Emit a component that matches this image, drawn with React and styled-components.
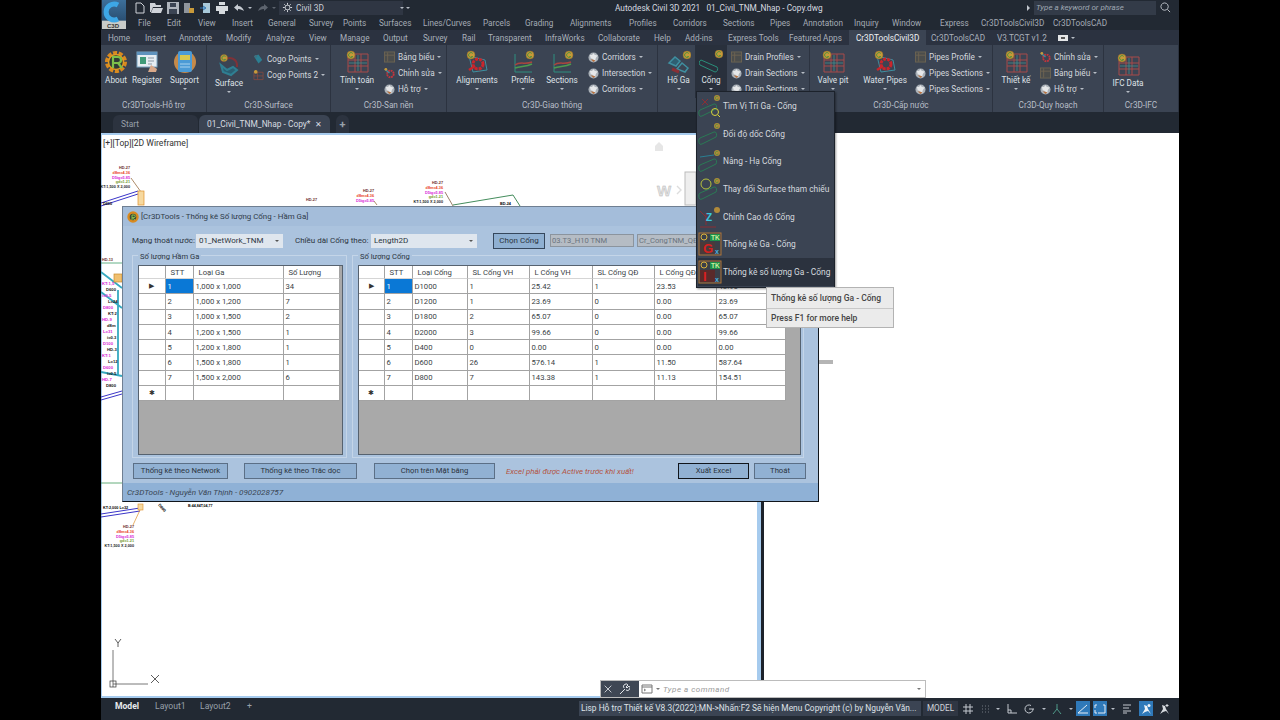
import React from 'react';
import styled, { createGlobalStyle } from 'styled-components';

const GlobalStyle = createGlobalStyle`
  html, body { margin: 0; padding: 0; background: #000; overflow: hidden; }
  #root { height: 720px; }
  * { box-sizing: border-box; }
  svg { flex: none; }
`;

const Page = styled.div`
  width: 1280px;
  height: 720px;
  background: #000;
  padding: 0 101px;
  font-family: Roboto, "Liberation Sans", sans-serif;
  font-size: 8.2px;
`;

const Shell = styled.div`
  position: relative;
  width: 1078px;
  height: 720px;
  display: flex;
  flex-direction: column;
  background: #222933;
  overflow: hidden;
`;

/* ---------- top bars ---------- */
const TopBar = styled.div`
  display: flex;
  height: 30px;
  background: #222933;
`;

const AppButton = styled.div`
  width: 24px;
  height: 29px;
  margin-left: 1px;
  background: linear-gradient(#3d6f9a, #2a4f72 70%, #c9ccc8 72%);
`;

const TopRows = styled.div`
  display: flex;
  flex-direction: column;
  flex: 1;
`;

const QuickRow = styled.div`
  display: flex;
  align-items: center;
  height: 15px;
  padding-left: 8px;
`;

const QuickIcon = styled.div`
  flex: none;
  width: ${p => p.$w}px;
  height: 12px;
  display: flex;
  align-items: center;
`;

const Workspace = styled.div`
  flex: none;
  display: flex;
  align-items: center;
  width: 124px;
  height: 14px;
  background: #2f3643;
  color: #c9ced6;
  padding: 0 3px;
  gap: 3px;
  font-size: 8.4px;
  white-space: nowrap;
`;

const Caret = styled.span`
  flex: none;
  display: inline-block;
  width: 0;
  height: 0;
  border-left: 2px solid transparent;
  border-right: 2px solid transparent;
  border-top: 2.5px solid ${p => p.$color || '#b7bdc6'};
  margin-left: ${p => p.$ml || 0}px;
`;

const WindowTitle = styled.div`
  flex: none;
  margin-left: 205px;
  width: 412px;
  color: #d7dbe0;
  font-size: 8.3px;
  white-space: pre;
`;

const SearchArrow = styled.span`
  flex: none;
  width: 7px;
  height: 0;
  border-left: 3px solid #c3c8cf;
  border-top: 3px solid transparent;
  border-bottom: 3px solid transparent;
  border-right: 0;
`;

const SearchBox = styled.div`
  flex: none;
  display: flex;
  align-items: center;
  width: 122px;
  height: 14px;
  margin-right: 4px;
  background: #333b48;
  color: #9fa7b2;
  font-style: italic;
  font-size: 8px;
  padding-left: 2px;
  white-space: nowrap;
`;

const TextRow = styled.div`
  display: flex;
  align-items: center;
  height: ${p => p.$h}px;
  background: ${p => p.$bg || 'transparent'};
  padding-left: ${p => p.$pad || 0}px;
`;

const Cell = styled.div`
  flex: none;
  width: ${p => p.$w}px;
  height: 100%;
  display: flex;
  align-items: center;
  white-space: nowrap;
`;

const MenuLabel = styled.span`
  color: #a4abb5;
  font-size: 8.2px;
`;

const RibbonTab = styled.span`
  display: flex;
  align-items: center;
  height: 100%;
  padding: 0 7px;
  font-size: 8.2px;
  color: ${p => (p.$active ? '#f1f3f5' : '#aab1bb')};
  background: ${p => (p.$active ? '#3b4453' : 'transparent')};
`;

/* ---------- ribbon ---------- */
const Ribbon = styled.div`
  display: flex;
  height: 67px;
  background: #3b4453;
`;

const Panel = styled.div`
  flex: none;
  width: ${p => p.$w}px;
  display: flex;
  flex-direction: column;
  border-right: 1px solid #2c3340;
`;

const PanelBody = styled.div`
  display: flex;
  height: 53px;
  padding-left: ${p => p.$pad || 0}px;
`;

const PanelLabel = styled.div`
  height: 14px;
  line-height: 15px;
  text-align: center;
  color: #b9bfc8;
  font-size: 8.2px;
  white-space: nowrap;
`;

const LargeButton = styled.div`
  flex: none;
  width: ${p => p.$w}px;
  display: flex;
  flex-direction: column;
  align-items: center;
  padding-top: ${p => (p.$low ? 8 : 5)}px;
  background: ${p => (p.$active ? '#29303c' : 'transparent')};
  color: #dfe2e7;
  font-size: 8.2px;
  line-height: 12px;
  white-space: nowrap;
`;

const LargeCaret = styled(Caret)`
  margin-top: 2px;
`;

const SmallList = styled.div`
  flex: none;
  display: flex;
  flex-direction: column;
  padding-top: ${p => p.$top || 4}px;
  padding-left: ${p => p.$pad || 0}px;
`;

const SmallButton = styled.div`
  display: flex;
  align-items: center;
  gap: 3px;
  height: 16px;
  color: #d5d9df;
  font-size: 8.2px;
  white-space: nowrap;
`;

/* ---------- document tabs ---------- */
const DocTabs = styled.div`
  display: flex;
  align-items: flex-end;
  height: 21px;
  padding-left: 12px;
  background: #222933;
  gap: 1px;
`;

const DocTab = styled.div`
  display: flex;
  align-items: center;
  justify-content: space-between;
  width: ${p => p.$w}px;
  height: 18px;
  padding: 0 8px;
  border-radius: 6px 6px 0 0;
  background: ${p => (p.$active ? '#3b4453' : '#2c333f')};
  color: ${p => (p.$active ? '#d7dbe0' : '#98a0aa')};
  font-size: 8.4px;
  white-space: nowrap;
`;

const PlusTab = styled(DocTab)`
  margin-left: 5px;
  padding: 0;
  justify-content: center;
  font-size: 11px;
  font-weight: 700;
`;

/* ---------- drawing ---------- */
const Canvas = styled.div`
  position: relative;
  display: flex;
  flex: 1;
  background: #fff;
`;

const ActiveViewport = styled.div`
  flex: none;
  width: 660px;
  background: #fff;
  border: 2px solid #a6cbee;
  border-left-width: 1px;
  border-right-width: 4px;
`;

const ViewportSplit = styled.div`
  flex: none;
  width: 3px;
  background: #1c222b;
`;

const SideViewport = styled.div`
  flex: 1;
  background: #fff;
`;

const ViewLabel = styled.div`
  font-size: 8.6px;
  line-height: 11px;
  margin-top: 3px;
  padding-left: 1px;
  color: #333;
`;

const Drawing = styled.svg`
  position: absolute;
  left: 0;
  top: 0;
`;

/* ---------- dialog ---------- */
const Dialog = styled.div`
  position: absolute;
  left: 21px;
  top: 206px;
  width: 697px;
  height: 296px;
  display: flex;
  flex-direction: column;
  background: #abc3de;
  border: 1px solid #6f7f92;
  border-right: 1px solid #10151b;
  border-bottom: 1.5px solid #10151b;
  font-family: Roboto, "Liberation Sans", sans-serif;
  color: #2c3541;
`;

const DialogTitle = styled.div`
  display: flex;
  align-items: center;
  gap: 2px;
  height: 19px;
  padding-left: 4px;
  background: #a4bdda;
  font-size: 7.9px;
  color: #2f3a48;
  white-space: nowrap;
`;

const FormRow = styled.div`
  display: flex;
  align-items: center;
  height: 15px;
  margin-top: 7px;
  padding-left: 9px;
  font-size: 8px;
`;

const FormLabel = styled.span`
  width: ${p => p.$w}px;
  flex: none;
  white-space: nowrap;
`;

const Combo = styled.div`
  flex: none;
  display: flex;
  align-items: center;
  justify-content: space-between;
  width: ${p => p.$w}px;
  height: 14px;
  margin-right: ${p => p.$mr || 0}px;
  padding: 0 4px 0 3px;
  background: #dfe6ee;
  font-size: 8px;
  white-space: nowrap;
`;

const PickButton = styled.div`
  flex: none;
  width: 52px;
  height: 16px;
  line-height: 14px;
  text-align: center;
  background: #8fb0d2;
  border: 1px solid #35475c;
  margin-right: 5px;
  font-size: 8px;
`;

const ReadOnly = styled.div`
  flex: none;
  width: ${p => p.$w}px;
  height: 13px;
  line-height: 11px;
  padding-left: 1px;
  margin-right: 3px;
  background: #b5bcc4;
  border: 1px solid #8b949e;
  color: #6a7480;
  font-size: 7.6px;
  overflow: hidden;
  white-space: nowrap;
`;

const Groups = styled.div`
  display: flex;
  gap: 5px;
  height: 203px;
  margin-top: 7px;
  padding-left: 9px;
`;

const GroupBox = styled.div`
  position: relative;
  flex: none;
  width: ${p => p.$w}px;
  height: 203px;
  padding: 9px 3px 3px 5px;
  border: 1px solid #c4d5e8;
`;

const GroupTitle = styled.span`
  position: absolute;
  left: 5px;
  top: -4px;
  padding: 0 2px;
  background: #abc3de;
  font-size: 7.6px;
  line-height: 10px;
  white-space: nowrap;
`;

const GridFrame = styled.div`
  width: ${p => p.$w}px;
  height: 190px;
  background: #a9a9a9;
  border: 1px solid #56626f;
  border-top-width: 1.5px;
  border-left-width: 1.5px;
`;

const DataGrid = styled.div`
  display: grid;
  grid-template-columns: ${p => p.$cols};
  grid-template-rows: 13px repeat(8, 15.3px);
  justify-content: start;
`;

const GridCell = styled.div`
  display: flex;
  align-items: center;
  padding-left: ${p => (p.$head ? 5 : 2)}px;
  background: ${p => (p.$selected ? '#0a78d6' : '#fff')};
  color: ${p => (p.$selected ? '#fff' : '#3a3f46')};
  border-right: 1px solid #a3a3a3;
  border-bottom: 1px solid ${p => (p.$head ? '#d5d5d5' : '#a3a3a3')};
  font-size: 7.7px;
  white-space: nowrap;
  overflow: hidden;
`;

const RowHead = styled(GridCell)`
  justify-content: center;
  padding: 0;
  color: #333;
  font-size: 6.5px;
`;

const ActionRow = styled.div`
  display: flex;
  align-items: center;
  height: 16px;
  margin-top: 5px;
  padding-left: 10px;
`;

const ActionButton = styled.div`
  flex: none;
  width: ${p => p.$w}px;
  height: 16px;
  line-height: 14px;
  margin-right: ${p => p.$mr}px;
  text-align: center;
  background: #91b1d3;
  border: 1px solid ${p => (p.$primary ? '#10151b' : '#5b6f86')};
  font-size: 7.7px;
  color: #2b3440;
  white-space: nowrap;
`;

const Warning = styled.span`
  flex: none;
  width: 172px;
  color: #b4533f;
  font-style: italic;
  font-size: 7.9px;
  white-space: nowrap;
`;

const DialogStatus = styled.div`
  display: flex;
  align-items: center;
  flex: 1;
  margin-top: 4px;
  padding-left: 4px;
  background: #8fb1d6;
  color: #3a4654;
  font-style: italic;
  font-size: 8.1px;
  white-space: nowrap;
`;

/* ---------- dropdown + tooltip ---------- */
const Dropdown = styled.div`
  position: absolute;
  left: 595px;
  top: 91px;
  width: 139px;
  height: 197px;
  padding: 0 0 1px 1px;
  background: #3b4453;
  border: 1px solid #1c222b;
  box-shadow: 1px 1px 2px rgba(0, 0, 0, 0.4);
`;

const DropItem = styled.div`
  display: flex;
  align-items: center;
  gap: 1px;
  height: 27.7px;
  color: #d5d9df;
  font-size: 8.4px;
  white-space: nowrap;
  background: ${p => (p.$hover ? '#2b323e' : 'transparent')};
`;

const Tooltip = styled.div`
  position: absolute;
  left: 665px;
  top: 287px;
  width: 128px;
  height: 41px;
  background: #ebebeb;
  border: 1px solid #b3b3b3;
  color: #444;
  font-size: 8.5px;
  font-weight: 500;
`;

const TipLine = styled.div`
  height: ${p => p.$h}px;
  padding-left: 4px;
  display: flex;
  align-items: center;
  border-top: ${p => (p.$rule ? '1px solid #c8c8c8' : 'none')};
  white-space: nowrap;
`;

/* ---------- command line + status ---------- */
const CommandLine = styled.div`
  position: absolute;
  left: 499px;
  top: 680px;
  width: 326px;
  height: 18px;
  display: flex;
  border: 1px solid #bcbcbc;
  background: #fff;
`;

const CommandTools = styled.div`
  display: flex;
  align-items: center;
  gap: 5px;
  width: 38px;
  padding-left: 2px;
  background: #3f4754;
  color: #d8dce1;
`;

const CommandInput = styled.div`
  flex: 1;
  display: flex;
  align-items: center;
  gap: 3px;
  padding: 0 4px 0 2px;
  color: #9a9a9a;
  font-style: italic;
  font-size: 8px;
  letter-spacing: 0.5px;
  white-space: nowrap;
`;

const TailCaret = styled(Caret)`
  margin-left: auto;
`;

const StatusBar = styled.div`
  display: flex;
  height: 22px;
  background: #222933;
  padding-top: 3px;
`;

const LayoutTabs = styled.div`
  display: flex;
  flex: none;
  width: 478px;
  height: 16px;
  margin-top: -2px;
  padding-left: 14px;
`;

const LayoutTab = styled.span`
  flex: none;
  width: ${p => p.$w}px;
  line-height: 15px;
  color: ${p => (p.$active ? '#e8eaed' : '#98a0aa')};
  font-size: 8.6px;
  font-weight: ${p => (p.$active ? 700 : 400)};
`;

const StatusText = styled.div`
  flex: none;
  width: 342px;
  height: 15px;
  line-height: 15px;
  padding-left: 2px;
  background: #3b4453;
  color: #dfe2e7;
  font-size: 8.4px;
  white-space: nowrap;
`;

const ModelBox = styled.div`
  flex: none;
  width: 35px;
  height: 15px;
  line-height: 15px;
  margin-left: 2px;
  text-align: center;
  background: #2f3643;
  color: #cfd3d9;
  font-size: 8.2px;
`;

const StatusIcon = styled.div`
  flex: none;
  display: flex;
  align-items: center;
  justify-content: center;
  width: ${p => p.$w}px;
  height: 15px;
  background: ${p => (p.$on ? '#2f79b9' : 'transparent')};
  margin-right: ${p => p.$mr || 0}px;
`;

/* ---------- icons ---------- */
const Icon = ({ size = 24, children }) => (
  <svg width={size} height={size} viewBox="0 0 24 24" fill="none">{children}</svg>
);

const Badge = ({ x = 18, y = 5, r = 4 }) => (
  <g>
    <circle cx={x} cy={y} r={r} fill="#c79a3a" stroke="#8a6a2a" strokeWidth="0.5" />
    <path d={`M${x + r * 0.45} ${y - r * 0.4}a${r * 0.6} ${r * 0.6} 0 1 0 0 ${r * 0.8}h-${r * 0.4}`} stroke="#4f8f3a" strokeWidth="1" />
  </g>
);

const GearIcon = () => (
  <Icon>
    <circle cx="12" cy="12" r="9" stroke="#d98a1f" strokeWidth="4" strokeDasharray="4 1.6" />
    <circle cx="12" cy="12" r="7.5" fill="#2f3a35" stroke="#e09a25" strokeWidth="1.5" />
    <path d="M9 18V7h5a3 3 0 0 1 0 6H9m5 0l4 5" stroke="#7cc04a" strokeWidth="2.2" />
  </Icon>
);

const RegisterIcon = () => (
  <Icon>
    <rect x="2" y="2" width="20" height="15" fill="#e6edf2" stroke="#7aa3c2" />
    <rect x="2" y="2" width="20" height="3" fill="#5f93bd" />
    <rect x="5" y="7" width="6" height="7" fill="#3f9a78" />
    <path d="M13 8h6M13 11h6M13 14h4" stroke="#8a97a3" />
    <path d="M13 22l3-7 6 4-1 3z" fill="#d9a98a" />
  </Icon>
);

const SupportIcon = () => (
  <Icon>
    <circle cx="12" cy="12" r="11" fill="#c58a4a" />
    <rect x="5" y="1" width="14" height="21" rx="2" fill="#4b9bd6" />
    <rect x="7" y="5" width="10" height="5" fill="#d8c84f" />
    <path d="M7 14h10M7 17h10" stroke="#a9d3ef" />
  </Icon>
);

const GridIcon = () => (
  <Icon>
    <path d="M3 4h20v18H3zM3 10h20M3 16h20M10 4v18M16 4v18" stroke="#a84a4a" strokeWidth="1" />
    <path d="M4 13h18M13 5v16" stroke="#3f8f8f" strokeWidth="0.8" />
    <Badge x={6} y={5} />
  </Icon>
);

const SurfaceIcon = () => (
  <Icon>
    <path d="M5 8c8-6 16-2 15 6" stroke="#7f3238" strokeWidth="2" />
    <path d="M4 12l6 5 6-3 4 3-6 5-8-3z" stroke="#2f7f92" strokeWidth="2" fill="#2b5f73" />
    <Badge x={7} y={5} r={3.5} />
  </Icon>
);

const AlignIcon = () => (
  <Icon>
    <path d="M4 6l16 4 2 10-14 2z" stroke="#3f8fa0" strokeWidth="1" />
    <circle cx="13" cy="14" r="5" stroke="#c8262c" strokeWidth="3" strokeDasharray="3 1" />
    <path d="M4 20l6-4" stroke="#c8262c" strokeWidth="2.5" />
    <Badge x={6} y={5} />
  </Icon>
);

const ProfileIcon = () => (
  <Icon>
    <path d="M4 4v18h17" stroke="#2f8f80" strokeWidth="1" />
    <path d="M4 15c5-4 10 0 17-3" stroke="#a9453f" strokeWidth="1.5" />
    <path d="M4 18c6-2 11-1 17-4" stroke="#4d9a4f" strokeWidth="1.5" />
    <Badge x={19} y={5} />
  </Icon>
);

const ManholeIcon = () => (
  <Icon>
    <path d="M2 13l6-6 5 4-4 5z" stroke="#3f8fa0" strokeWidth="1.5" fill="#2e5f72" />
    <path d="M10 19l5-6 6 5-3 4z" stroke="#3f8fa0" strokeWidth="1.5" />
    <path d="M5 19l7 3" stroke="#8a2f35" strokeWidth="3" />
    <Badge x={20} y={5} />
  </Icon>
);

const PipeIcon = ({ color = '#2a8f7a' }) => (
  <Icon>
    <path d="M2 10l16 7a2.5 3 0 0 1-2 5L1 15a2.5 3 0 0 1 1-5z" stroke={color} strokeWidth="1" />
    <Badge x={20} y={4} />
  </Icon>
);

const SmallGlobe = () => (
  <svg width="11" height="11" viewBox="0 0 12 12">
    <circle cx="6" cy="6" r="5.5" fill="#aab1b8" />
    <path d="M2 3c2 1 3 0 4-2 1 3 3 2 5 3-2 1-3 3-3 6-2-1-2-3-5-3z" fill="#e6e8ea" />
    <path d="M3 8l3 3 2-2z" fill="#b8703c" />
  </svg>
);

const SmallTable = () => (
  <svg width="11" height="12" viewBox="0 0 12 12">
    <rect x="0.5" y="0.5" width="11" height="11" fill="#4b4d4c" stroke="#6d6452" />
    <path d="M4 1v10M1 4h10" stroke="#6d6452" />
  </svg>
);

const SmallEdit = () => (
  <svg width="11" height="12" viewBox="0 0 12 12">
    <circle cx="7" cy="7" r="3.6" stroke="#c2353d" strokeWidth="2" fill="none" strokeDasharray="2 0.8" />
    <path d="M1 2l5 4" stroke="#3f8fa0" strokeWidth="1.5" />
    <circle cx="2" cy="2" r="1.5" fill="#c79a3a" />
  </svg>
);

const SmallCogo = () => (
  <svg width="11" height="12" viewBox="0 0 12 12">
    <path d="M1 3l5-2 4 6-4 4z" fill="#2c7f92" />
    <circle cx="3" cy="3" r="1.5" fill="#3f6f7f" />
  </svg>
);

const SmallCogoGrid = () => (
  <svg width="11" height="12" viewBox="0 0 12 12">
    <path d="M1 3h10v8H1zM1 7h10M5 3v8" stroke="#8a4a3f" strokeWidth="0.8" fill="none" />
    <circle cx="3" cy="2.5" r="2" fill="#c79a3a" />
  </svg>
);

const MenuPipe = ({ extra, color = '#2a7a55' }) => (
  <svg width="24" height="24" viewBox="0 0 24 24" fill="none">
    <path d="M2 16l14-6a2 3 0 0 1 2 5L4 22a2 3 0 0 1-2-6z" stroke={color} strokeWidth="1" />
    <circle cx="19" cy="4" r="3" fill="#b08a3a" />
    <path d="M20.300 3a1.700 1.700 0 1 0 0 2h-1" stroke="#5b8f3a" strokeWidth="0.8" />
    {extra}
  </svg>
);

const TkIcon = ({ letter, bg }) => (
  <svg width="24" height="24" viewBox="0 0 24 24" fontFamily="Liberation Sans, sans-serif" fontWeight="700">
    <rect x="1" y="1" width="22" height="22" fill="#3a3f48" stroke="#b0773a" />
    <rect x="12" y="2" width="10" height="7" fill="#1e8f4a" />
    <text x="13" y="8" fontSize="6.5" fill="#c8f0a0">TK</text>
    <circle cx="6" cy="5" r="3" stroke="#d8b13c" fill="none" />
    <rect x="2" y="10" width="15" height="12" fill={bg} />
    <text x="5" y="21" fontSize="13" fill="#d62020">{letter}</text>
    <text x="17" y="22" fontSize="7" fill="#4ab0e0">x</text>
  </svg>
);

const Arrow = ({ flip, color = '#c7ccd3' }) => (
  <svg width="12" height="10" viewBox="0 0 12 10" style={flip ? { transform: 'scaleX(-1)' } : undefined}>
    <path d="M5 1L1 4.500 5 8V6c3 0 4 1 6 2-1-3-3-5-6-5z" fill={color} />
  </svg>
);

/* ---------- data ---------- */
const menuStarts = [
  ['File', 137], ['Edit', 166], ['View', 197], ['Insert', 231], ['General', 267], ['Survey', 308],
  ['Points', 342], ['Surfaces', 378], ['Lines/Curves', 422], ['Parcels', 482], ['Grading', 524],
  ['Alignments', 569], ['Profiles', 628], ['Corridors', 672], ['Sections', 722], ['Pipes', 769],
  ['Annotation', 802], ['Inquiry', 853], ['Window', 891], ['Express', 939], ['Cr3DToolsCivil3D', 980],
  ['Cr3DToolsCAD', 1052], ['', 1120],
];

const tabStarts = [
  ['Home', 101], ['Insert', 138], ['Annotate', 172], ['Modify', 219], ['Analyze', 259], ['View', 302],
  ['Manage', 333], ['Output', 376], ['Survey', 416], ['Rail', 455], ['Transparent', 481],
  ['InfraWorks', 538], ['Collaborate', 591], ['Help', 647], ['Add-ins', 678], ['Express Tools', 721],
  ['Featured Apps', 782], ['Cr3DToolsCivil3D', 849], ['Cr3DToolsCAD', 924], ['V3.TCGT v1.2', 990], ['', 1058],
];

const withWidths = list => list.slice(0, -1).map(([label, x], i) => ({ label, w: list[i + 1][1] - x }));

const haRows = [
  ['1', '1,000 x 1,000', '34'], ['2', '1,000 x 1,200', '7'], ['3', '1,000 x 1,500', '2'],
  ['4', '1,200 x 1,500', '1'], ['5', '1,200 x 1,800', '1'], ['6', '1,500 x 1,800', '1'],
  ['7', '1,500 x 2,000', '6'], ['', '', ''],
];

const congRows = [
  ['1', 'D1000', '1', '25.42', '1', '23.53', '48.95'],
  ['2', 'D1200', '1', '23.69', '0', '0.00', '23.69'],
  ['3', 'D1800', '2', '65.07', '0', '0.00', '65.07'],
  ['4', 'D2000', '3', '99.66', '0', '0.00', '99.66'],
  ['5', 'D400', '0', '0.00', '0', '0.00', '0.00'],
  ['6', 'D600', '26', '576.14', '1', '11.50', '587.64'],
  ['7', 'D800', '7', '143.38', '1', '11.13', '154.51'],
  ['', '', '', '', '', '', ''],
];

const Table = ({ cols, heads, rows }) => (
  <DataGrid $cols={cols}>
    <GridCell $head />
    {heads.map((h, i) => <GridCell $head key={i}>{h}</GridCell>)}
    {rows.map((row, r) => (
      <React.Fragment key={r}>
        <RowHead>{r === 0 ? '▶' : r === rows.length - 1 ? '✱' : ''}</RowHead>
        {row.map((v, c) => <GridCell key={c} $selected={r === 0 && c === 0}>{v}</GridCell>)}
      </React.Fragment>
    ))}
  </DataGrid>
);

const stackLines = [
  ['HD-27', '#6b2a1a'], ['d8m=4.36', '#e8401a'], ['D5tg=5.85', '#d61fd6'], ['gd=1.21', '#6f9a1f'], ['KT:1,500 X 2,000', '#222'],
];

const LabelStack = ({ x, y, count = 5 }) => stackLines.slice(0, count).map(([t, c], i) => (
  <text key={t} x={x} y={y + i * 4.8} textAnchor="end" fontSize="3.8" fontWeight="700" fill={c} fontFamily="Liberation Sans, sans-serif">{t}</text>
));

const noise = [
  [102, 285, 'KT:1,5'], [106, 291, 'D600'], [102, 297, 'i=0.5'], [108, 303, 'L=24'], [103, 309, 'D800'], [108, 315, 'KT:2'],
  [102, 321, 'HD-9'], [107, 327, 'd8m'], [103, 333, 'L=31'], [107, 339, 'i=0.3'], [103, 345, 'D100'], [107, 351, 'HD-3'],
  [102, 357, 'KT:1'], [108, 363, 'L=12'], [103, 369, 'D600'], [107, 375, 'i=0.5'], [102, 381, 'HD-7'], [106, 387, 'D800'],
];

const CadDrawing = () => (
  <Drawing width="1078" height="565" viewBox="101 133 1078 565">
    <LabelStack x={130} y={169} />
    <path d="M131 178l10 14" stroke="#8a5a2a" strokeWidth="0.7" fill="none" />
    <path d="M101 203l37-12M101 206l37-12" stroke="#3a35c8" strokeWidth="1" />
    <rect x="138" y="191" width="6" height="14" fill="#f6d9a0" stroke="#e0902a" strokeWidth="0.7" />
    <text x="103" y="205" fontSize="3.800" fontWeight="700" fontFamily="Liberation Sans, sans-serif">D600</text>

    <LabelStack x={317} y={201} count={1} />
    <LabelStack x={374} y={192} count={3} />
    <path d="M374 201l3 4" stroke="#8a5a2a" strokeWidth="0.7" />
    <LabelStack x={443} y={184} />
    <path d="M445 192l8 14" stroke="#6b4a2a" strokeWidth="0.7" fill="none" />
    <path d="M453 205l60-10 7 11" stroke="#2f7f4a" strokeWidth="0.9" fill="none" />
    <text x="500" y="205" fontSize="3.800" fontWeight="700" fontFamily="Liberation Sans, sans-serif">BD-24</text>

    <path d="M101 263h21" stroke="#3fa06a" strokeWidth="0.8" />
    <text x="102" y="261" fontSize="3.800" fontWeight="700" fill="#6b2a1a" fontFamily="Liberation Sans, sans-serif">HD-13</text>
    <path d="M101 272l21 16M101 292l21 16M118 290v85M101 372l21 4" stroke="#37a9c0" strokeWidth="1.800" fill="none" />
    <rect x="114" y="274" width="8" height="8" fill="#f0c070" stroke="#c88a2a" strokeWidth="0.7" />
    {noise.map(([x, y, t]) => (
      <text key={y} x={x} y={y} fontSize="4.200" fontWeight="700" fill={y % 4 === 1 ? '#d61fd6' : '#111'} fontFamily="Liberation Sans, sans-serif">{t}</text>
    ))}
    <path d="M101 397l21-6M101 400l21-6" stroke="#3a35c8" strokeWidth="1" />

    <path d="M101 483h21" stroke="#3f9a5a" strokeWidth="0.8" />
    <path d="M101 514l39-6M101 517l39-6" stroke="#3a35c8" strokeWidth="1" />
    <text x="103" y="509" fontSize="3.800" fontWeight="700" fontFamily="Liberation Sans, sans-serif">KT:2,000 L=32</text>
    <path d="M133 525l7-15" stroke="#e0902a" strokeWidth="0.7" fill="none" />
    <rect x="138" y="504" width="5" height="6" fill="#f6d9a0" stroke="#e0902a" strokeWidth="0.6" />
    <LabelStack x={134} y={528} />
    <text x="188" y="507" fontSize="3.600" fontWeight="700" fontFamily="Liberation Sans, sans-serif">B:44,84T,04,77</text>
    <text x="158" y="505" fontSize="4" fontWeight="700" transform="rotate(50 158 505)" fontFamily="Liberation Sans, sans-serif">D800</text>

    {/* viewcube */}
    <path d="M655 146l4-4 4 4v5h-8z" fill="#e6e6e6" />
    <text x="657" y="196" fontSize="15" fontWeight="700" fill="#e2e2e2" stroke="#b5b5b5" strokeWidth="0.4" fontFamily="Liberation Sans, sans-serif">W</text>
    <path d="M677 186l4 4-4 4" stroke="#ddd" strokeWidth="1.400" fill="none" />
    <rect x="685" y="172" width="11" height="33" fill="#eee" stroke="#bbb" />

    <path d="M819 361h14M819 363h14" stroke="#444" strokeWidth="0.8" />

    {/* UCS */}
    <path d="M113 650v37M113 684h35" stroke="#555" strokeWidth="0.8" />
    <rect x="110" y="681" width="6" height="6" fill="none" stroke="#333" strokeWidth="0.7" />
    <path d="M115 639l3 4 3-4M118 643v4M151 675l8 8M159 675l-8 8" stroke="#333" strokeWidth="0.8" fill="none" />
  </Drawing>
);

const Glyph = ({ d, color = '#c3c8cf', size = 12 }) => (
  <svg width={size} height={size} viewBox="0 0 12 12" fill="none">
    <path d={d} stroke={color} strokeWidth="1" />
  </svg>
);

export default function App() {
  return (
    <Page>
      <GlobalStyle />
      <Shell>
        <TopBar>
          <AppButton>
            <svg width="24" height="29" viewBox="0 0 24 29">
              <path d="M16 5a8 8 0 1 0 0 14" stroke="#3da7e6" strokeWidth="5" fill="none" />
              <text x="5" y="27.500" fontSize="6" fontWeight="700" fill="#333" fontFamily="Liberation Sans, sans-serif">C3D</text>
            </svg>
          </AppButton>
          <TopRows>
            <QuickRow>
              <QuickIcon $w={16}><Glyph d="M2 1h5l3 3v7H2z" color="#cfd3d9" /></QuickIcon>
              <QuickIcon $w={17}><svg width="13" height="11" viewBox="0 0 13 11"><path d="M0 1h5l1 2h5v2H3L1 10H0zM3 6h10l-2 5H1z" fill="#cfd3d9" /></svg></QuickIcon>
              <QuickIcon $w={16}><svg width="12" height="12" viewBox="0 0 12 12"><path d="M0 0h12v12H0z" fill="#aeb4bc" /><path d="M3 1h6v4H3zM2 7h8v5H2z" fill="#3b4453" /></svg></QuickIcon>
              <QuickIcon $w={17}><svg width="12" height="12" viewBox="0 0 12 12"><path d="M1 1h6v10H1z" fill="#8f959c" /><path d="M6 6h5v5H6z" fill="#c99a3a" /></svg></QuickIcon>
              <QuickIcon $w={16}><svg width="12" height="12" viewBox="0 0 12 12"><path d="M3 1h7v10H3z" fill="#a9c9d9" /><path d="M0 6h5M3 4l3 2-3 2" stroke="#2f79b9" fill="none" /></svg></QuickIcon>
              <QuickIcon $w={17}><svg width="12" height="12" viewBox="0 0 12 12"><path d="M3 0h6v3H3zM0 4h12v5H0zM3 7h6v5H3z" fill="#d6dade" /></svg></QuickIcon>
              <QuickIcon $w={15}><Arrow /></QuickIcon>
              <QuickIcon $w={9}><Caret /></QuickIcon>
              <QuickIcon $w={15}><Arrow flip color="#5d646e" /></QuickIcon>
              <QuickIcon $w={7}><Caret $color="#5d646e" /></QuickIcon>
              <Workspace>
                <Glyph size={11} d="M6 1v2M6 9v2M1 6h2M9 6h2M2.500 2.500l1.500 1.500M8 8l1.500 1.500M2.500 9.500L4 8M8 4l1.500-1.500M6 3.500a2.500 2.500 0 1 0 .01 0z" color="#e3e6ea" />
                <span>Civil 3D</span>
                <Caret $ml={73} />
              </Workspace>
              <Caret $ml={3} />
              <WindowTitle>Autodesk Civil 3D 2021   01_Civil_TNM_Nhap - Copy.dwg</WindowTitle>
              <SearchArrow />
              <SearchBox>Type a keyword or phrase</SearchBox>
              <QuickIcon $w={16}><Glyph d="M5 1a4 4 0 1 0 .01 0zM8 8l3 3" size={11} /></QuickIcon>
            </QuickRow>
            <TextRow $h={15} $pad={12}>
              {withWidths(menuStarts).map(m => (
                <Cell key={m.label} $w={m.w}><MenuLabel>{m.label}</MenuLabel></Cell>
              ))}
            </TextRow>
          </TopRows>
        </TopBar>

        <TextRow $h={15} $bg="#2b3240">
          {withWidths(tabStarts).map(t => (
            <Cell key={t.label} $w={t.w}><RibbonTab $active={t.label === 'Cr3DToolsCivil3D'}>{t.label}</RibbonTab></Cell>
          ))}
          <Cell $w={20}><svg width="10" height="6" viewBox="0 0 10 6"><rect width="10" height="6" fill="#e4e6e8" /><rect x="3" y="2" width="4" height="2" fill="#555" /></svg><Caret $ml={3} /></Cell>
        </TextRow>

        <Ribbon>
          <Panel $w={106}>
            <PanelBody>
              <LargeButton $w={30}><GearIcon />About</LargeButton>
              <LargeButton $w={32}><RegisterIcon />Register</LargeButton>
              <LargeButton $w={43}><SupportIcon />Support<LargeCaret /></LargeButton>
            </PanelBody>
            <PanelLabel>Cr3DTools-Hỗ trợ</PanelLabel>
          </Panel>
          <Panel $w={124}>
            <PanelBody>
              <LargeButton $w={44} $low><SurfaceIcon />Surface<LargeCaret /></LargeButton>
              <SmallList $top={6} $pad={2}>
                <SmallButton><SmallCogo />Cogo Points <Caret /></SmallButton>
                <SmallButton><SmallCogoGrid />Cogo Points 2 <Caret /></SmallButton>
              </SmallList>
            </PanelBody>
            <PanelLabel>Cr3D-Surface</PanelLabel>
          </Panel>
          <Panel $w={116}>
            <PanelBody>
              <LargeButton $w={52}><GridIcon />Tính toán<LargeCaret /></LargeButton>
              <SmallList $pad={1}>
                <SmallButton><SmallTable />Bảng biểu <Caret /></SmallButton>
                <SmallButton><SmallEdit />Chỉnh sửa <Caret /></SmallButton>
                <SmallButton><SmallGlobe />Hỗ trợ <Caret /></SmallButton>
              </SmallList>
            </PanelBody>
            <PanelLabel>Cr3D-San nền</PanelLabel>
          </Panel>
          <Panel $w={211}>
            <PanelBody>
              <LargeButton $w={60}><AlignIcon />Alignments<LargeCaret /></LargeButton>
              <LargeButton $w={32}><ProfileIcon />Profile<LargeCaret /></LargeButton>
              <LargeButton $w={46}><ProfileIcon />Sections<LargeCaret /></LargeButton>
              <SmallList $pad={3}>
                <SmallButton><SmallGlobe />Corridors <Caret /></SmallButton>
                <SmallButton><SmallGlobe />Intersection <Caret /></SmallButton>
                <SmallButton><SmallGlobe />Corridors <Caret /></SmallButton>
              </SmallList>
            </PanelBody>
            <PanelLabel>Cr3D-Giao thông</PanelLabel>
          </Panel>
          <Panel $w={152}>
            <PanelBody $pad={4}>
              <LargeButton $w={33}><ManholeIcon />Hố Ga<LargeCaret /></LargeButton>
              <LargeButton $w={32} $active><PipeIcon />Cống<LargeCaret /></LargeButton>
              <SmallList $pad={4}>
                <SmallButton><SmallTable />Drain Profiles <Caret /></SmallButton>
                <SmallButton><SmallGlobe />Drain Sections <Caret /></SmallButton>
                <SmallButton><SmallGlobe />Drain Sections <Caret /></SmallButton>
              </SmallList>
            </PanelBody>
            <PanelLabel />
          </Panel>
          <Panel $w={183}>
            <PanelBody>
              <LargeButton $w={46}><GridIcon />Valve pit<LargeCaret /></LargeButton>
              <LargeButton $w={58}><AlignIcon />Water Pipes<LargeCaret /></LargeButton>
              <SmallList $pad={1}>
                <SmallButton><SmallTable />Pipes Profile <Caret /></SmallButton>
                <SmallButton><SmallGlobe />Pipes Sections <Caret /></SmallButton>
                <SmallButton><SmallGlobe />Pipes Sections <Caret /></SmallButton>
              </SmallList>
            </PanelBody>
            <PanelLabel>Cr3D-Cấp nước</PanelLabel>
          </Panel>
          <Panel $w={111}>
            <PanelBody>
              <LargeButton $w={46}><GridIcon />Thiết kế<LargeCaret /></LargeButton>
              <SmallList $pad={1}>
                <SmallButton><SmallEdit />Chỉnh sửa <Caret /></SmallButton>
                <SmallButton><SmallTable />Bảng biểu <Caret /></SmallButton>
                <SmallButton><SmallGlobe />Hỗ trợ <Caret /></SmallButton>
              </SmallList>
            </PanelBody>
            <PanelLabel>Cr3D-Quy hoạch</PanelLabel>
          </Panel>
          <Panel $w={75}>
            <PanelBody>
              <LargeButton $w={48} $low><GridIcon />IFC Data<LargeCaret /></LargeButton>
            </PanelBody>
            <PanelLabel>Cr3D-IFC</PanelLabel>
          </Panel>
        </Ribbon>

        <DocTabs>
          <DocTab $w={85}>Start</DocTab>
          <DocTab $w={131} $active>01_Civil_TNM_Nhap - Copy*<span>✕</span></DocTab>
          <PlusTab $w={13}>+</PlusTab>
        </DocTabs>

        <Canvas>
          <ActiveViewport>
            <ViewLabel>[+][Top][2D Wireframe]</ViewLabel>
          </ActiveViewport>
          <ViewportSplit />
          <SideViewport />
          <CadDrawing />
        </Canvas>

        <StatusBar>
          <LayoutTabs>
            <LayoutTab $w={40} $active>Model</LayoutTab>
            <LayoutTab $w={45}>Layout1</LayoutTab>
            <LayoutTab $w={47}>Layout2</LayoutTab>
            <LayoutTab $w={12}>+</LayoutTab>
          </LayoutTabs>
          <StatusText>Lisp Hỗ trợ Thiết kế V8.3(2022):MN-&gt;Nhấn:F2 Sẽ hiện Menu Copyright (c) by Nguyễn Văn...</StatusText>
          <ModelBox>MODEL</ModelBox>
          <StatusIcon $w={20}><Glyph d="M4 1v10M8 1v10M1 4h10M1 8h10" /></StatusIcon>
          <StatusIcon $w={14}><Glyph d="M3 3h.5M6 3h.5M9 3h.5M3 6h.5M6 6h.5M9 6h.5M3 9h.5M6 9h.5M9 9h.5" /></StatusIcon>
          <StatusIcon $w={12}><Caret /></StatusIcon>
          <StatusIcon $w={15}><Glyph d="M2 1v9h9M2 7h3v3" /></StatusIcon>
          <StatusIcon $w={20}><Glyph d="M10 6a4 4 0 1 1-2-3.500M6 6h5" /></StatusIcon>
          <StatusIcon $w={9}><Caret /></StatusIcon>
          <StatusIcon $w={18}><Glyph d="M6 1v5M6 6l-4 5M6 6l4 5" color="#4f9a8a" /></StatusIcon>
          <StatusIcon $w={10}><Caret /></StatusIcon>
          <StatusIcon $w={14} $on $mr={3}><Glyph d="M1 10L10 2M1 10h10" color="#e7eef5" /></StatusIcon>
          <StatusIcon $w={14} $on><Glyph d="M3 2H1v3M9 2h2v8H4M1 7v3h2" color="#e7eef5" /></StatusIcon>
          <StatusIcon $w={12}><Caret /></StatusIcon>
          <StatusIcon $w={16} $mr={4}><Glyph d="M2 2h8M2 5h6M2 8h8M2 10h4" /></StatusIcon>
          <StatusIcon $w={14} $on $mr={4}><svg width="12" height="12" viewBox="0 0 12 12"><path d="M2 11l3-5-1-4 3 1 1 3 3 5-3-3-3 1z" fill="#eef3f8" /><circle cx="9" cy="2.500" r="1.500" fill="#eef3f8" /></svg></StatusIcon>
          <StatusIcon $w={14}><svg width="12" height="12" viewBox="0 0 12 12"><path d="M2 11l3-5-1-4 3 1 1 3 3 5-3-3-3 1z" fill="#d7dbe0" /><path d="M9 1v3M7.500 2.500h3" stroke="#d7dbe0" /></svg></StatusIcon>
        </StatusBar>

        <Dialog>
          <DialogTitle>
            <svg width="12" height="12" viewBox="0 0 12 12">
              <circle cx="6" cy="6" r="4.500" stroke="#d98a1f" strokeWidth="2.400" fill="#3a4a3a" />
              <path d="M5 9V4h2a1.300 1.300 0 0 1 0 2.600H5l3 2.400" stroke="#8cc04a" fill="none" />
            </svg>
            [Cr3DTools - Thống kê Số lượng Cống - Hầm Ga]
          </DialogTitle>
          <FormRow>
            <FormLabel $w={64}>Mạng thoát nước:</FormLabel>
            <Combo $w={87} $mr={12}>01_NetWork_TNM <Caret $color="#555" /></Combo>
            <FormLabel $w={76}>Chiều dài Cống theo:</FormLabel>
            <Combo $w={106} $mr={16}>Length2D <Caret $color="#555" /></Combo>
            <PickButton>Chọn Cống</PickButton>
            <ReadOnly $w={84}>03.T3_H10 TNM</ReadOnly>
            <ReadOnly $w={60}>Cr_CongTNM_QĐ</ReadOnly>
          </FormRow>
          <Groups>
            <GroupBox $w={215}>
              <GroupTitle>Số lượng Hầm Ga</GroupTitle>
              <GridFrame $w={205}>
                <Table
                  cols="26.5px 28px 90px 56px"
                  heads={['STT', 'Loại Ga', 'Số Lượng']}
                  rows={haRows}
                />
              </GridFrame>
            </GroupBox>
            <GroupBox $w={452}>
              <GroupTitle>Số lượng Cống</GroupTitle>
              <GridFrame $w={443}>
                <Table
                  cols="25.5px 28px 55px 62px 63px 62px 62px 69px"
                  heads={['STT', 'Loại Cống', 'SL Cống VH', 'L Cống VH', 'SL Cống QĐ', 'L Cống QĐ', '']}
                  rows={congRows}
                />
              </GridFrame>
            </GroupBox>
          </Groups>
          <ActionRow>
            <ActionButton $w={95} $mr={16}>Thống kê theo Network</ActionButton>
            <ActionButton $w={113} $mr={17}>Thống kê theo Trắc dọc</ActionButton>
            <ActionButton $w={121} $mr={11}>Chọn trên Mặt bằng</ActionButton>
            <Warning>Excel phải được Active trước khi xuất!</Warning>
            <ActionButton $w={71} $mr={5} $primary>Xuất Excel</ActionButton>
            <ActionButton $w={52} $mr={0}>Thoát</ActionButton>
          </ActionRow>
          <DialogStatus>Cr3DTools - Nguyễn Văn Thịnh - 0902028757</DialogStatus>
        </Dialog>

        <Dropdown>
          <DropItem><MenuPipe extra={<g><circle cx="17" cy="18" r="3.500" stroke="#d8d23c" fill="none" /><path d="M20 21l2 2" stroke="#d8d23c" /><path d="M4 5l6 6M10 5l-6 6" stroke="#8a2f35" /></g>} />Tìm Vị Trí Ga - Cống</DropItem>
          <DropItem><MenuPipe />Đổi độ dốc Cống</DropItem>
          <DropItem><MenuPipe extra={<path d="M2 8l14-2" stroke="#2a7f92" />} />Nâng - Hạ Cống</DropItem>
          <DropItem><MenuPipe extra={<circle cx="8" cy="7" r="5" stroke="#b8c23c" fill="none" />} />Thay đổi Surface tham chiếu</DropItem>
          <DropItem>
            <svg width="24" height="24" viewBox="0 0 24 24" fill="none" fontFamily="Liberation Sans, sans-serif">
              <path d="M2 6l6 6M2 22h16M8 20V8" stroke="#8a2f35" />
              <text x="8" y="16" fontSize="10" fontWeight="700" fill="#3ac8e0">Z</text>
              <circle cx="19" cy="5" r="3" fill="#b08a3a" />
            </svg>
            Chỉnh Cao độ Cống
          </DropItem>
          <DropItem><TkIcon letter="G" bg="#4a3a3a" />Thống kê Ga - Cống</DropItem>
          <DropItem $hover><TkIcon letter="I" bg="#5a2a2a" />Thống kê số lượng Ga - Cống</DropItem>
        </Dropdown>

        <Tooltip>
          <TipLine $h={20}>Thống kê số lượng Ga - Cống</TipLine>
          <TipLine $h={19} $rule>Press F1 for more help</TipLine>
        </Tooltip>

        <CommandLine>
          <CommandTools>
            <Glyph size={10} d="M2 2l8 8M10 2l-8 8" color="#e2e5e9" />
            <Glyph size={12} d="M2 11l5-5M6 5a2.500 2.500 0 0 1 4-3L8 4l1 1 2-2a2.500 2.500 0 0 1-3 4" color="#e2e5e9" />
          </CommandTools>
          <CommandInput>
            <Glyph size={12} d="M1 2h10v8H1zM1 4h10M3 6l1.500 1L3 8" color="#777" />
            <Caret $color="#777" />
            <span>Type a command</span>
            <TailCaret $color="#777" />
          </CommandInput>
        </CommandLine>
      </Shell>
    </Page>
  );
}
